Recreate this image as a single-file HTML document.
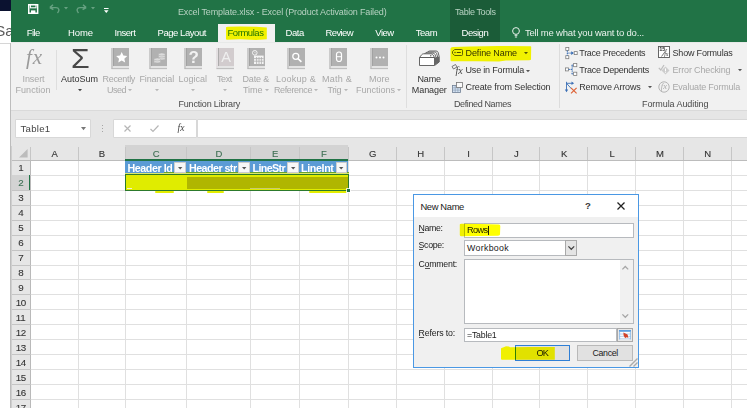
<!DOCTYPE html>
<html><head><meta charset="utf-8"><title>Excel - New Name</title><style>
html,body{margin:0;padding:0}
body{width:747px;height:408px;position:relative;overflow:hidden;background:#fff;font-family:"Liberation Sans",sans-serif;}
.a{position:absolute}
.t{position:absolute;white-space:nowrap;line-height:1}
svg{overflow:visible}
</style></head><body>
<div class="a" style="left:0px;top:0px;width:11px;height:11px;background:#0b1230;"></div>
<div class="a" style="left:0px;top:11px;width:11px;height:397px;background:#ffffff;"></div>
<span class="t" style="left:-4.8px;top:23.00px;font-size:15px;color:#5a5a5a;font-weight:normal;letter-spacing:0.000px;">Sa</span>
<div class="a" style="left:11px;top:0px;width:736px;height:41.5px;background:#217346;"></div>
<div class="a" style="left:450px;top:0px;width:50.4px;height:41.5px;background:#1b5c38;"></div>
<div class="a" style="left:218px;top:24px;width:57px;height:18px;background:#f1f1f1;"></div>
<div class="a" style="left:11px;top:41.5px;width:736px;height:69.5px;background:#f1f1f1;"></div>
<div class="a" style="left:11px;top:110.5px;width:736px;height:50px;background:#e6e6e6;"></div>
<div class="a" style="left:11px;top:110px;width:736px;height:1px;background:#dadada;"></div>
<div class="a" style="left:10px;top:43px;width:1px;height:365px;background:#bdbdbd;"></div>
<div class="a" style="left:0px;top:43px;width:10px;height:1px;background:#d6d6d6;"></div>
<div class="a" style="left:11px;top:41.5px;width:736px;height:1px;background:#e7e9e8;"></div>
<span class="t" style="left:178px;top:8.16px;font-size:9px;color:#b7d2c2;font-weight:normal;letter-spacing:-0.144px;">Excel Template.xlsx - Excel (Product Activation Failed)</span>
<span class="t" style="left:455px;top:8.16px;font-size:9px;color:#b7d2c2;font-weight:normal;letter-spacing:-0.398px;">Table Tools</span>
<span class="t" style="left:26.8px;top:27.93px;font-size:9.5px;color:#ffffff;font-weight:normal;letter-spacing:-0.603px;">File</span>
<span class="t" style="left:68px;top:27.93px;font-size:9.5px;color:#ffffff;font-weight:normal;letter-spacing:-0.086px;">Home</span>
<span class="t" style="left:114.5px;top:27.93px;font-size:9.5px;color:#ffffff;font-weight:normal;letter-spacing:-0.461px;">Insert</span>
<span class="t" style="left:157.5px;top:27.93px;font-size:9.5px;color:#ffffff;font-weight:normal;letter-spacing:-0.442px;">Page Layout</span>
<span class="t" style="left:227.5px;top:27.93px;font-size:9.5px;color:#217346;font-weight:normal;letter-spacing:-0.449px;">Formulas</span>
<svg class="a" style="left:0;top:0;mix-blend-mode:multiply;opacity:1" width="747" height="408" viewBox="0 0 747 408"><path d="M226 27.600 Q226 26.800 228 26.700 L240 26.400 L256 26.800 L266.800 27.400 L266.800 39.300 L256 40 L240 39.3 L227 39.8 Q226 39.8 226 39 Z" fill="#ffff00"/></svg>
<span class="t" style="left:285.5px;top:27.93px;font-size:9.5px;color:#ffffff;font-weight:normal;letter-spacing:-0.395px;">Data</span>
<span class="t" style="left:325.5px;top:27.93px;font-size:9.5px;color:#ffffff;font-weight:normal;letter-spacing:-0.609px;">Review</span>
<span class="t" style="left:375.3px;top:27.93px;font-size:9.5px;color:#ffffff;font-weight:normal;letter-spacing:-0.530px;">View</span>
<span class="t" style="left:415.7px;top:27.93px;font-size:9.5px;color:#ffffff;font-weight:normal;letter-spacing:-0.434px;">Team</span>
<span class="t" style="left:461.6px;top:27.93px;font-size:9.5px;color:#ffffff;font-weight:normal;letter-spacing:-0.496px;">Design</span>
<span class="t" style="left:525px;top:27.93px;font-size:9.5px;color:#e8f1eb;font-weight:normal;letter-spacing:-0.205px;">Tell me what you want to do...</span>
<svg class="a" style="left:511px;top:26px;" width="10" height="14" viewBox="0 0 10 14"><circle cx="5" cy="5" r="3.4" fill="none" stroke="#e8f1eb" stroke-width="1"/><path d="M3.6 9.3h2.8M3.9 11h2.2" stroke="#e8f1eb" stroke-width="1" fill="none"/></svg>
<svg class="a" style="left:27.6px;top:4px;" width="10.4" height="10" viewBox="0 0 10.4 10"><rect x="0.750" y="0.750" width="8.900" height="8.500" fill="none" stroke="#fff" stroke-width="1.500"/><rect x="2.400" y="0.500" width="5.600" height="3.300" fill="none" stroke="#fff" stroke-width="1.100"/><rect x="3" y="6.400" width="4.400" height="3.200" fill="#fff"/></svg>
<svg class="a" style="left:49px;top:4px;" width="12" height="10" viewBox="0 0 12 10"><path d="M0.8 3.6 L4 0.8 M0.8 3.6 L4.4 5.6 M0.8 3.6 H7 C10 3.6 11 6.5 8.5 9" fill="none" stroke="#66a181" stroke-width="1.450"/></svg>
<svg class="a" style="left:64px;top:6.9px;" width="4" height="3" viewBox="0 0 4 3"><path d="M0 0h4L2 2.4z" fill="#66a181"/></svg>
<svg class="a" style="left:75px;top:4px;" width="12" height="10" viewBox="0 0 12 10"><path d="M11.2 3.6 L8 0.8 M11.2 3.6 L7.6 5.6 M11.2 3.6 H5 C2 3.6 1 6.5 3.5 9" fill="none" stroke="#66a181" stroke-width="1.450"/></svg>
<svg class="a" style="left:90.5px;top:6.9px;" width="4" height="3" viewBox="0 0 4 3"><path d="M0 0h4L2 2.4z" fill="#66a181"/></svg>
<svg class="a" style="left:104px;top:7.8px;" width="4.6" height="5.2" viewBox="0 0 4.6 5.2"><path d="M0 0.500h4.600" stroke="#fff" stroke-width="1"/><path d="M0 2.300h4.600L2.300 4.900z" fill="#fff"/></svg>
<span class="t" style="left:26px;top:47.30px;font-size:21px;color:#9a9a9a;font-weight:normal;letter-spacing:0.922px;font-family:'Liberation Serif',serif;font-style:italic;">fx</span>
<span class="t" style="left:22.5px;top:74.66px;font-size:9.0px;color:#a8a8a8;font-weight:normal;letter-spacing:-0.086px;">Insert</span>
<span class="t" style="left:15.5px;top:86.16px;font-size:9.0px;color:#a8a8a8;font-weight:normal;letter-spacing:0.059px;">Function</span>
<div class="a" style="left:56px;top:50px;width:1px;height:40px;background:#dedede;"></div>
<span class="t" style="left:71px;top:45.98px;font-size:27px;color:#484848;font-weight:normal;letter-spacing:0.000px;transform:scaleX(1.12);transform-origin:0 0;">Σ</span>
<span class="t" style="left:61px;top:74.66px;font-size:9.0px;color:#333333;font-weight:normal;letter-spacing:-0.004px;">AutoSum</span>
<svg class="a" style="left:78px;top:88.7px;" width="4" height="2.3" viewBox="0 0 4 2.3"><path d="M0 0h4L2 2.3z" fill="#444"/></svg>
<svg class="a" style="left:110.6px;top:47.5px;" width="18" height="21" viewBox="0 0 18 21"><rect x="0" y="0" width="18" height="18.2" fill="#b1b1b1"/><rect x="0" y="0" width="2" height="20.8" fill="#cbcbcb"/><rect x="2" y="0" width="0.7" height="18.2" fill="#9c9c9c"/><rect x="2" y="18.2" width="16" height="2" fill="#e4e4e4"/><rect x="0.5" y="20.2" width="17.5" height="0.9" fill="#b4b4b4"/><path d="M10.7 4l1.65 3.6 3.9.4-2.9 2.65.8 3.9-3.45-2-3.45 2 .8-3.9-2.9-2.65 3.9-.4z" fill="#fff"/></svg>
<span class="t" style="left:102.5px;top:74.66px;font-size:9.0px;color:#a8a8a8;font-weight:normal;letter-spacing:-0.314px;">Recently</span>
<span class="t" style="left:107px;top:86.16px;font-size:9.0px;color:#a8a8a8;font-weight:normal;letter-spacing:-0.504px;">Used</span>
<svg class="a" style="left:128px;top:88.7px;" width="4" height="2.3" viewBox="0 0 4 2.3"><path d="M0 0h4L2 2.3z" fill="#b8b8b8"/></svg>
<svg class="a" style="left:148.8px;top:47.5px;" width="18" height="21" viewBox="0 0 18 21"><rect x="0" y="0" width="18" height="18.2" fill="#b1b1b1"/><rect x="0" y="0" width="2" height="20.8" fill="#cbcbcb"/><rect x="2" y="0" width="0.7" height="18.2" fill="#9c9c9c"/><rect x="2" y="18.2" width="16" height="2" fill="#e4e4e4"/><rect x="0.5" y="20.2" width="17.5" height="0.9" fill="#b4b4b4"/><g fill="#dcdcdc" stroke="#adadad" stroke-width="0.5"><ellipse cx="12.8" cy="10.4" rx="3.3" ry="1.5"/><ellipse cx="12.8" cy="8.4" rx="3.3" ry="1.5"/><ellipse cx="12.8" cy="6.4" rx="3.3" ry="1.5"/><ellipse cx="8.3" cy="13.4" rx="3.3" ry="1.5"/><ellipse cx="8.3" cy="11.4" rx="3.3" ry="1.5"/></g></svg>
<span class="t" style="left:139.5px;top:74.66px;font-size:9.0px;color:#a8a8a8;font-weight:normal;letter-spacing:-0.170px;">Financial</span>
<svg class="a" style="left:155px;top:88.7px;" width="4" height="2.3" viewBox="0 0 4 2.3"><path d="M0 0h4L2 2.3z" fill="#b8b8b8"/></svg>
<svg class="a" style="left:184px;top:47.5px;" width="18" height="21" viewBox="0 0 18 21"><rect x="0" y="0" width="18" height="18.2" fill="#b1b1b1"/><rect x="0" y="0" width="2" height="20.8" fill="#cbcbcb"/><rect x="2" y="0" width="0.7" height="18.2" fill="#9c9c9c"/><rect x="2" y="18.2" width="16" height="2" fill="#e4e4e4"/><rect x="0.5" y="20.2" width="17.5" height="0.9" fill="#b4b4b4"/></svg>
<span class="t" style="left:188.6px;top:48.97px;font-size:17px;color:#f2f2f2;font-weight:bold;letter-spacing:0.000px;">?</span>
<span class="t" style="left:178.5px;top:74.66px;font-size:9.0px;color:#a8a8a8;font-weight:normal;letter-spacing:-0.004px;">Logical</span>
<svg class="a" style="left:191px;top:88.7px;" width="4" height="2.3" viewBox="0 0 4 2.3"><path d="M0 0h4L2 2.3z" fill="#b8b8b8"/></svg>
<svg class="a" style="left:216.2px;top:47.5px;" width="18" height="21" viewBox="0 0 18 21"><rect x="0" y="0" width="18" height="18.2" fill="#d2ccce"/><rect x="0" y="0" width="2" height="20.8" fill="#e4e0e2"/><rect x="2" y="0" width="0.7" height="18.2" fill="#9c9c9c"/><rect x="2" y="18.2" width="16" height="2" fill="#e4e4e4"/><rect x="0.5" y="20.2" width="17.5" height="0.9" fill="#b4b4b4"/></svg>
<span class="t" style="left:221.2px;top:50.20px;font-size:14.6px;color:#efefef;font-weight:normal;letter-spacing:0.000px;">A</span>
<span class="t" style="left:217px;top:74.66px;font-size:9.0px;color:#a8a8a8;font-weight:normal;letter-spacing:-0.379px;">Text</span>
<svg class="a" style="left:222.5px;top:88.7px;" width="4" height="2.3" viewBox="0 0 4 2.3"><path d="M0 0h4L2 2.3z" fill="#b8b8b8"/></svg>
<svg class="a" style="left:247px;top:47.5px;" width="18" height="21" viewBox="0 0 18 21"><rect x="0" y="0" width="18" height="18.2" fill="#b1b1b1"/><rect x="0" y="0" width="2" height="20.8" fill="#cbcbcb"/><rect x="2" y="0" width="0.7" height="18.2" fill="#9c9c9c"/><rect x="2" y="18.2" width="16" height="2" fill="#e4e4e4"/><rect x="0.5" y="20.2" width="17.5" height="0.9" fill="#b4b4b4"/><rect x="7" y="7.6" width="9.6" height="8.4" fill="#f4f4f4"/><path d="M7 10.6h9.6M7 13.2h9.6M9.6 9v7M12 9v7M14.400 9v7" stroke="#adadad" stroke-width="0.8"/><circle cx="7.8" cy="4.8" r="2.3" fill="#adadad" stroke="#f4f4f4" stroke-width="1"/><path d="M7.8 3.6v1.4h1" stroke="#f4f4f4" stroke-width="0.6" fill="none"/></svg>
<span class="t" style="left:242.5px;top:74.66px;font-size:9.0px;color:#a8a8a8;font-weight:normal;letter-spacing:-0.169px;">Date &amp;</span>
<span class="t" style="left:243px;top:86.16px;font-size:9.0px;color:#a8a8a8;font-weight:normal;letter-spacing:-0.043px;">Time</span>
<svg class="a" style="left:265px;top:88.7px;" width="4" height="2.3" viewBox="0 0 4 2.3"><path d="M0 0h4L2 2.3z" fill="#b8b8b8"/></svg>
<svg class="a" style="left:287.2px;top:47.5px;" width="18" height="21" viewBox="0 0 18 21"><rect x="0" y="0" width="18" height="18.2" fill="#b1b1b1"/><rect x="0" y="0" width="2" height="20.8" fill="#cbcbcb"/><rect x="2" y="0" width="0.7" height="18.2" fill="#9c9c9c"/><rect x="2" y="18.2" width="16" height="2" fill="#e4e4e4"/><rect x="0.5" y="20.2" width="17.5" height="0.9" fill="#b4b4b4"/><circle cx="8.8" cy="8.3" r="3" fill="none" stroke="#fff" stroke-width="1.3"/><path d="M11 10.600l3.4 3.2" stroke="#fff" stroke-width="1.6"/></svg>
<span class="t" style="left:276px;top:74.66px;font-size:9.0px;color:#a8a8a8;font-weight:normal;letter-spacing:0.246px;">Lookup &amp;</span>
<span class="t" style="left:274px;top:86.16px;font-size:9.0px;color:#a8a8a8;font-weight:normal;letter-spacing:-0.392px;">Reference</span>
<svg class="a" style="left:314px;top:88.7px;" width="4" height="2.3" viewBox="0 0 4 2.3"><path d="M0 0h4L2 2.3z" fill="#b8b8b8"/></svg>
<svg class="a" style="left:328.5px;top:47.5px;" width="18" height="21" viewBox="0 0 18 21"><rect x="0" y="0" width="18" height="18.2" fill="#b1b1b1"/><rect x="0" y="0" width="2" height="20.8" fill="#cbcbcb"/><rect x="2" y="0" width="0.7" height="18.2" fill="#9c9c9c"/><rect x="2" y="18.2" width="16" height="2" fill="#e4e4e4"/><rect x="0.5" y="20.2" width="17.5" height="0.9" fill="#b4b4b4"/><rect x="7.5" y="4" width="5" height="9.5" rx="2.5" fill="none" stroke="#fff" stroke-width="1.2"/><path d="M7.5 8.7h5" stroke="#fff" stroke-width="1"/></svg>
<span class="t" style="left:322px;top:74.66px;font-size:9.0px;color:#a8a8a8;font-weight:normal;letter-spacing:0.247px;">Math &amp;</span>
<span class="t" style="left:327.5px;top:86.16px;font-size:9.0px;color:#a8a8a8;font-weight:normal;letter-spacing:-0.418px;">Trig</span>
<svg class="a" style="left:344px;top:88.7px;" width="4" height="2.3" viewBox="0 0 4 2.3"><path d="M0 0h4L2 2.3z" fill="#b8b8b8"/></svg>
<svg class="a" style="left:369.5px;top:47.5px;" width="18" height="21" viewBox="0 0 18 21"><rect x="0" y="0" width="18" height="18.2" fill="#b1b1b1"/><rect x="0" y="0" width="2" height="20.8" fill="#cbcbcb"/><rect x="2" y="0" width="0.7" height="18.2" fill="#9c9c9c"/><rect x="2" y="18.2" width="16" height="2" fill="#e4e4e4"/><rect x="0.5" y="20.2" width="17.5" height="0.9" fill="#b4b4b4"/><circle cx="6.5" cy="9.5" r="1" fill="#fff"/><circle cx="10" cy="9.5" r="1" fill="#fff"/><circle cx="13.5" cy="9.5" r="1" fill="#fff"/></svg>
<span class="t" style="left:369px;top:74.66px;font-size:9.0px;color:#a8a8a8;font-weight:normal;letter-spacing:-0.004px;">More</span>
<span class="t" style="left:356px;top:86.16px;font-size:9.0px;color:#a8a8a8;font-weight:normal;letter-spacing:-0.003px;">Functions</span>
<svg class="a" style="left:397px;top:88.7px;" width="4" height="2.3" viewBox="0 0 4 2.3"><path d="M0 0h4L2 2.3z" fill="#b8b8b8"/></svg>
<span class="t" style="left:178.5px;top:100.26px;font-size:9.0px;color:#4a4a4a;font-weight:normal;letter-spacing:-0.189px;">Function Library</span>
<div class="a" style="left:405.8px;top:45px;width:1px;height:62.5px;background:#dedede;"></div>
<svg class="a" style="left:419px;top:50px;" width="21" height="16" viewBox="0 0 21 16"><g fill="#fff" stroke="#555" stroke-width="0.9" stroke-linejoin="round"><path d="M7.500 7.500L9 2.200Q9.300 1 10.800 1H17Q18.500 1 19 2.200L20.200 6.500V12L16 15.200"/><path d="M5.500 7.500L7 3.200Q7.400 2 8.900 2H15.500Q17 2 17.500 3.200L18.800 7.500"/><path d="M3.500 7.500L5.200 4.200Q5.700 3 7.200 3H13.800Q15.300 3 15.800 4.200L17.200 7.500"/><path d="M0.500 7.500L2.800 4.600Q3.500 3.800 4.800 3.800H12Q13.400 3.800 14 4.800L15.500 7.500z"/><rect x="0.500" y="7.500" width="15" height="8"/></g><path d="M15.500 7.500L20.200 6.500V12L15.500 15.500z" fill="#666"/><circle cx="11.800" cy="5.800" r="0.700" fill="#555"/></svg>
<span class="t" style="left:417.5px;top:74.66px;font-size:9.0px;color:#333333;font-weight:normal;letter-spacing:-0.129px;">Name</span>
<span class="t" style="left:411.8px;top:86.16px;font-size:9.0px;color:#333333;font-weight:normal;letter-spacing:-0.076px;">Manager</span>
<svg class="a" style="left:451.5px;top:48.8px;" width="11" height="7" viewBox="0 0 11 7"><path d="M2.600 0.500H9.600Q10.500 0.500 10.500 1.400V5.600Q10.500 6.500 9.600 6.500H2.600L0.500 4.400V2.600z" fill="none" stroke="#4a4a4a" stroke-width="0.850"/><circle cx="3" cy="3.500" r="0.700" fill="#4a4a4a"/><path d="M4.800 3.500h4" stroke="#4a4a4a" stroke-width="1"/></svg>
<span class="t" style="left:465.5px;top:48.56px;font-size:9.0px;color:#333333;font-weight:normal;letter-spacing:-0.094px;">Define Name</span>
<svg class="a" style="left:524.2px;top:51.5px;" width="4" height="2.3" viewBox="0 0 4 2.3"><path d="M0 0h4L2 2.3z" fill="#555"/></svg>
<svg class="a" style="left:0;top:0;mix-blend-mode:multiply;opacity:1" width="747" height="408" viewBox="0 0 747 408"><path d="M450.5 48.6 Q450.6 47.4 453 47 L470 46.6 L498 45.9 L530.6 46.2 Q531.2 46.2 531.200 47 L531 59.6 Q531 60.2 529 60.3 L506 60.4 L499 61.500 L476 61.2 L451.5 61.2 Q450.5 61.2 450.5 60 Z" fill="#ffff00"/></svg>
<svg class="a" style="left:451px;top:64px;" width="12" height="12" viewBox="0 0 12 12"><path d="M1 2.5 L4.5 0.5 L6 3 L2.5 5z" fill="none" stroke="#666" stroke-width="0.9"/></svg>
<span class="t" style="left:455.5px;top:65.70px;font-size:10px;color:#444;font-weight:normal;letter-spacing:0.000px;font-family:'Liberation Serif',serif;font-style:italic;">fx</span>
<span class="t" style="left:465.5px;top:66.06px;font-size:9.0px;color:#333333;font-weight:normal;letter-spacing:-0.181px;">Use in Formula</span>
<svg class="a" style="left:526px;top:69.5px;" width="4" height="2.3" viewBox="0 0 4 2.3"><path d="M0 0h4L2 2.3z" fill="#555"/></svg>
<svg class="a" style="left:451.5px;top:81.5px;" width="11" height="11" viewBox="0 0 11 11"><rect x="0.500" y="3.500" width="8" height="7" fill="#d5e3f3" stroke="#6f7f93" stroke-width="0.800"/><path d="M0.500 5.800h8M0.500 8.100h8M3.200 3.500v7M5.900 3.500v7" stroke="#8195ad" stroke-width="0.600"/><rect x="4.500" y="0.500" width="6" height="5" fill="#fafafa" stroke="#777" stroke-width="0.800"/></svg>
<span class="t" style="left:465.5px;top:83.06px;font-size:9.0px;color:#333333;font-weight:normal;letter-spacing:-0.097px;">Create from Selection</span>
<span class="t" style="left:454px;top:100.26px;font-size:9.0px;color:#4a4a4a;font-weight:normal;letter-spacing:-0.387px;">Defined Names</span>
<div class="a" style="left:558.5px;top:44px;width:1px;height:64px;background:#dcdcdc;"></div>
<svg class="a" style="left:564.5px;top:46.5px;" width="13" height="12.5" viewBox="0 0 13 12.5"><g fill="#fff" stroke="#7d7d7d" stroke-width="0.800"><rect x="0.800" y="0.500" width="3" height="3"/><rect x="0.800" y="8.700" width="3" height="3"/><rect x="9.200" y="4.600" width="3" height="3"/></g><path d="M2.300 3.500v5.200M2.300 6.100h5.500" stroke="#3b6fb5" stroke-width="1" fill="none" stroke-dasharray="1.400 0.700"/><path d="M6.200 4.300l2.700 1.800-2.700 1.800z" fill="#3b6fb5"/></svg>
<span class="t" style="left:579.3px;top:48.56px;font-size:9.0px;color:#333333;font-weight:normal;letter-spacing:-0.294px;">Trace Precedents</span>
<svg class="a" style="left:564.5px;top:63.3px;" width="13" height="13" viewBox="0 0 13 13"><g fill="#fff" stroke="#7d7d7d" stroke-width="0.800"><rect x="0.500" y="4.900" width="3" height="3"/><rect x="8.600" y="0.500" width="3.200" height="3.200"/><rect x="8.600" y="9.200" width="3.200" height="3.200"/></g><path d="M3.500 6.400h4M7.200 3.200v6.600" stroke="#3b6fb5" stroke-width="1" fill="none" stroke-dasharray="1.400 0.700"/><path d="M6 2.800l1.200-1.600 1.200 1.600zM6 10.200l1.200 1.600 1.200-1.600z" fill="#3b6fb5"/></svg>
<span class="t" style="left:579.3px;top:65.66px;font-size:9.0px;color:#333333;font-weight:normal;letter-spacing:-0.251px;">Trace Dependents</span>
<svg class="a" style="left:564px;top:80.5px;" width="14" height="13" viewBox="0 0 14 13"><path d="M2.500 0.800v9.500M2.500 2.300h6M2.500 2.300l5 5.500" stroke="#3b6fb5" stroke-width="0.900" fill="none"/><path d="M0.800 8.500l1.700 2.800 1.700-2.800zM7.500 0.600l2.600 1.700-2.600 1.700z" fill="#3b6fb5"/><path d="M7 6.800l5.600 5.600M12.600 6.800l-5.600 5.600" stroke="#dd6236" stroke-width="1.150"/></svg>
<span class="t" style="left:579.3px;top:83.06px;font-size:9.0px;color:#333333;font-weight:normal;letter-spacing:-0.172px;">Remove Arrows</span>
<svg class="a" style="left:648px;top:85.5px;" width="4" height="2.3" viewBox="0 0 4 2.3"><path d="M0 0h4L2 2.3z" fill="#555"/></svg>
<svg class="a" style="left:658px;top:46px;" width="12" height="12" viewBox="0 0 12 12"><rect x="0.5" y="0.5" width="11" height="11" fill="#fff" stroke="#555" stroke-width="0.9"/><path d="M3.500 10.500l5.500-7.500" stroke="#555" stroke-width="0.8"/></svg>
<span class="t" style="left:659.2px;top:46.80px;font-size:5.6px;color:#333;font-weight:bold;letter-spacing:0.000px;">15</span>
<span class="t" style="left:664.2px;top:51.70px;font-size:5.8px;color:#333;font-weight:normal;letter-spacing:0.000px;font-family:'Liberation Serif',serif;font-style:italic;">fx</span>
<span class="t" style="left:672.5px;top:48.56px;font-size:9.0px;color:#333333;font-weight:normal;letter-spacing:-0.187px;">Show Formulas</span>
<svg class="a" style="left:658px;top:63.5px;" width="12" height="12" viewBox="0 0 12 12"><path d="M0.800 3.800l2 2.200 3.200-5" stroke="#bdbdbd" stroke-width="1.200" fill="none"/><path d="M7.500 2.600l4 4-4 4-4-4z" fill="#cdcdcd"/><rect x="7" y="4.400" width="1" height="2.700" fill="#fff"/><rect x="7" y="7.700" width="1" height="1" fill="#fff"/></svg>
<span class="t" style="left:672.5px;top:65.66px;font-size:9.0px;color:#a8a8a8;font-weight:normal;letter-spacing:-0.152px;">Error Checking</span>
<svg class="a" style="left:737.8px;top:68.6px;" width="4" height="2.3" viewBox="0 0 4 2.3"><path d="M0 0h4L2 2.3z" fill="#555"/></svg>
<svg class="a" style="left:658px;top:80.5px;" width="12" height="12" viewBox="0 0 12 12"><circle cx="6" cy="6" r="5.2" fill="none" stroke="#b5b5b5" stroke-width="1"/></svg>
<span class="t" style="left:660.8px;top:82.07px;font-size:8.5px;color:#aaa;font-weight:normal;letter-spacing:0.000px;font-family:'Liberation Serif',serif;font-style:italic;">fx</span>
<span class="t" style="left:672.5px;top:83.06px;font-size:9.0px;color:#a8a8a8;font-weight:normal;letter-spacing:-0.190px;">Evaluate Formula</span>
<span class="t" style="left:642px;top:100.26px;font-size:9.0px;color:#4a4a4a;font-weight:normal;letter-spacing:-0.065px;">Formula Auditing</span>
<div class="a" style="left:15.5px;top:119.5px;width:74.5px;height:17.4px;background:#ffffff;box-shadow:0 0 0 0.6px #d0d0d0"></div>
<span class="t" style="left:20.5px;top:124.48px;font-size:9.6px;color:#444;font-weight:normal;letter-spacing:0.286px;">Table1</span>
<svg class="a" style="left:80.5px;top:126.5px;" width="5" height="3.2" viewBox="0 0 5 3.2"><path d="M0 0h5L2.5 3.2z" fill="#777"/></svg>
<div class="a" style="left:101.5px;top:125.4px;width:1.1px;height:1.1px;background:#a5a5a5;"></div>
<div class="a" style="left:101.5px;top:128px;width:1.1px;height:1.1px;background:#a5a5a5;"></div>
<div class="a" style="left:101.5px;top:130.6px;width:1.1px;height:1.1px;background:#a5a5a5;"></div>
<div class="a" style="left:113.5px;top:119.5px;width:82px;height:17.4px;background:#ffffff;box-shadow:0 0 0 0.6px #d0d0d0"></div>
<div class="a" style="left:198px;top:119.5px;width:549px;height:17.4px;background:#ffffff;box-shadow:0 0 0 0.6px #d0d0d0"></div>
<svg class="a" style="left:124px;top:125px;" width="7" height="7" viewBox="0 0 7 7"><path d="M0.5 0.5l6 6M6.5 0.5l-6 6" stroke="#b6b6b6" stroke-width="1.200"/></svg>
<svg class="a" style="left:150px;top:125px;" width="9" height="7" viewBox="0 0 9 7"><path d="M0.500 4l2.500 2.500L8.500 0.500" stroke="#b6b6b6" stroke-width="1.200" fill="none"/></svg>
<span class="t" style="left:177.5px;top:124.09px;font-size:9.5px;color:#444;font-weight:normal;letter-spacing:0.000px;font-family:'Liberation Serif',serif;font-style:italic;">fx</span>
<div class="a" style="left:30.5px;top:160.5px;width:717px;height:248px;background:#ffffff;"></div>
<div class="a" style="left:125px;top:145.4px;width:223px;height:15px;background:#d3d3d3;"></div>
<span class="t" style="left:44.75px;top:148.73px;font-size:9.5px;color:#333333;font-weight:normal;letter-spacing:0.000px;width:20px;text-align:center;-webkit-text-stroke:0.12px currentColor;">A</span>
<div class="a" style="left:77.5px;top:147px;width:1px;height:13.5px;background:#c6c6c6;"></div>
<span class="t" style="left:92.0px;top:148.73px;font-size:9.5px;color:#333333;font-weight:normal;letter-spacing:0.000px;width:20px;text-align:center;-webkit-text-stroke:0.12px currentColor;">B</span>
<div class="a" style="left:124.5px;top:147px;width:1px;height:13.5px;background:#c6c6c6;"></div>
<span class="t" style="left:146.25px;top:148.73px;font-size:9.5px;color:#3c6e52;font-weight:normal;letter-spacing:0.000px;width:20px;text-align:center;-webkit-text-stroke:0.12px currentColor;">C</span>
<div class="a" style="left:186.0px;top:147px;width:1px;height:13.5px;background:#c6c6c6;"></div>
<span class="t" style="left:209.0px;top:148.73px;font-size:9.5px;color:#3c6e52;font-weight:normal;letter-spacing:0.000px;width:20px;text-align:center;-webkit-text-stroke:0.12px currentColor;">D</span>
<div class="a" style="left:250.0px;top:147px;width:1px;height:13.5px;background:#c6c6c6;"></div>
<span class="t" style="left:265.25px;top:148.73px;font-size:9.5px;color:#3c6e52;font-weight:normal;letter-spacing:0.000px;width:20px;text-align:center;-webkit-text-stroke:0.12px currentColor;">E</span>
<div class="a" style="left:298.5px;top:147px;width:1px;height:13.5px;background:#c6c6c6;"></div>
<span class="t" style="left:314.0px;top:148.73px;font-size:9.5px;color:#3c6e52;font-weight:normal;letter-spacing:0.000px;width:20px;text-align:center;-webkit-text-stroke:0.12px currentColor;">F</span>
<div class="a" style="left:347.5px;top:147px;width:1px;height:13.5px;background:#c6c6c6;"></div>
<span class="t" style="left:362.67px;top:148.73px;font-size:9.5px;color:#333333;font-weight:normal;letter-spacing:0.000px;width:20px;text-align:center;-webkit-text-stroke:0.12px currentColor;">G</span>
<div class="a" style="left:395.84000000000003px;top:147px;width:1px;height:13.5px;background:#c6c6c6;"></div>
<span class="t" style="left:410.76px;top:148.73px;font-size:9.5px;color:#333333;font-weight:normal;letter-spacing:0.000px;width:20px;text-align:center;-webkit-text-stroke:0.12px currentColor;">H</span>
<div class="a" style="left:443.68px;top:147px;width:1px;height:13.5px;background:#c6c6c6;"></div>
<span class="t" style="left:458.6px;top:148.73px;font-size:9.5px;color:#333333;font-weight:normal;letter-spacing:0.000px;width:20px;text-align:center;-webkit-text-stroke:0.12px currentColor;">I</span>
<div class="a" style="left:491.52px;top:147px;width:1px;height:13.5px;background:#c6c6c6;"></div>
<span class="t" style="left:506.44000000000005px;top:148.73px;font-size:9.5px;color:#333333;font-weight:normal;letter-spacing:0.000px;width:20px;text-align:center;-webkit-text-stroke:0.12px currentColor;">J</span>
<div class="a" style="left:539.36px;top:147px;width:1px;height:13.5px;background:#c6c6c6;"></div>
<span class="t" style="left:554.28px;top:148.73px;font-size:9.5px;color:#333333;font-weight:normal;letter-spacing:0.000px;width:20px;text-align:center;-webkit-text-stroke:0.12px currentColor;">K</span>
<div class="a" style="left:587.2px;top:147px;width:1px;height:13.5px;background:#c6c6c6;"></div>
<span class="t" style="left:602.12px;top:148.73px;font-size:9.5px;color:#333333;font-weight:normal;letter-spacing:0.000px;width:20px;text-align:center;-webkit-text-stroke:0.12px currentColor;">L</span>
<div class="a" style="left:635.04px;top:147px;width:1px;height:13.5px;background:#c6c6c6;"></div>
<span class="t" style="left:649.96px;top:148.73px;font-size:9.5px;color:#333333;font-weight:normal;letter-spacing:0.000px;width:20px;text-align:center;-webkit-text-stroke:0.12px currentColor;">M</span>
<div class="a" style="left:682.88px;top:147px;width:1px;height:13.5px;background:#c6c6c6;"></div>
<span class="t" style="left:697.8px;top:148.73px;font-size:9.5px;color:#333333;font-weight:normal;letter-spacing:0.000px;width:20px;text-align:center;-webkit-text-stroke:0.12px currentColor;">N</span>
<div class="a" style="left:730.72px;top:147px;width:1px;height:13.5px;background:#c6c6c6;"></div>
<div class="a" style="left:778.5600000000001px;top:147px;width:1px;height:13.5px;background:#c6c6c6;"></div>
<div class="a" style="left:30px;top:147px;width:1px;height:13.5px;background:#c6c6c6;"></div>
<svg class="a" style="left:19.2px;top:148.8px;" width="8.6" height="8.6" viewBox="0 0 8.6 8.6"><path d="M8.600 0V8.600H0z" fill="#bcbcbc"/></svg>
<div class="a" style="left:11px;top:160px;width:736px;height:1px;background:#bcbcbc;"></div>
<div class="a" style="left:125px;top:159px;width:223px;height:1.7px;background:#217346;"></div>
<div class="a" style="left:11px;top:161px;width:19.5px;height:247px;background:#e6e6e6;"></div>
<div class="a" style="left:11px;top:146px;width:1px;height:262px;background:#cfcfcf;"></div>
<div class="a" style="left:30px;top:161px;width:1px;height:247px;background:#b9b9b9;"></div>
<span class="t" style="left:18.2px;top:163.49px;font-size:9.8px;color:#333333;font-weight:normal;letter-spacing:0.000px;-webkit-text-stroke:0.1px currentColor;">1</span>
<div class="a" style="left:11.5px;top:174.8px;width:19px;height:1px;background:#c4c4c4;"></div>
<div class="a" style="left:30.5px;top:174.8px;width:717px;height:1px;background:#e0e0e0;"></div>
<div class="a" style="left:11.5px;top:175.25px;width:18.5px;height:15px;background:#d3d3d3;"></div>
<div class="a" style="left:28.8px;top:175.25px;width:1.7px;height:15px;background:#217346;"></div>
<span class="t" style="left:18.2px;top:178.44px;font-size:9.8px;color:#3c6e52;font-weight:normal;letter-spacing:0.000px;-webkit-text-stroke:0.1px currentColor;">2</span>
<div class="a" style="left:11.5px;top:189.75px;width:19px;height:1px;background:#c4c4c4;"></div>
<div class="a" style="left:30.5px;top:189.75px;width:717px;height:1px;background:#e0e0e0;"></div>
<span class="t" style="left:18.2px;top:193.39px;font-size:9.8px;color:#333333;font-weight:normal;letter-spacing:0.000px;-webkit-text-stroke:0.1px currentColor;">3</span>
<div class="a" style="left:11.5px;top:204.70000000000002px;width:19px;height:1px;background:#c4c4c4;"></div>
<div class="a" style="left:30.5px;top:204.70000000000002px;width:717px;height:1px;background:#e0e0e0;"></div>
<span class="t" style="left:18.2px;top:208.34px;font-size:9.8px;color:#333333;font-weight:normal;letter-spacing:0.000px;-webkit-text-stroke:0.1px currentColor;">4</span>
<div class="a" style="left:11.5px;top:219.65px;width:19px;height:1px;background:#c4c4c4;"></div>
<div class="a" style="left:30.5px;top:219.65px;width:717px;height:1px;background:#e0e0e0;"></div>
<span class="t" style="left:18.2px;top:223.29px;font-size:9.8px;color:#333333;font-weight:normal;letter-spacing:0.000px;-webkit-text-stroke:0.1px currentColor;">5</span>
<div class="a" style="left:11.5px;top:234.60000000000002px;width:19px;height:1px;background:#c4c4c4;"></div>
<div class="a" style="left:30.5px;top:234.60000000000002px;width:717px;height:1px;background:#e0e0e0;"></div>
<span class="t" style="left:18.2px;top:238.24px;font-size:9.8px;color:#333333;font-weight:normal;letter-spacing:0.000px;-webkit-text-stroke:0.1px currentColor;">6</span>
<div class="a" style="left:11.5px;top:249.55px;width:19px;height:1px;background:#c4c4c4;"></div>
<div class="a" style="left:30.5px;top:249.55px;width:717px;height:1px;background:#e0e0e0;"></div>
<span class="t" style="left:18.2px;top:253.19px;font-size:9.8px;color:#333333;font-weight:normal;letter-spacing:0.000px;-webkit-text-stroke:0.1px currentColor;">7</span>
<div class="a" style="left:11.5px;top:264.5px;width:19px;height:1px;background:#c4c4c4;"></div>
<div class="a" style="left:30.5px;top:264.5px;width:717px;height:1px;background:#e0e0e0;"></div>
<span class="t" style="left:18.2px;top:268.14px;font-size:9.8px;color:#333333;font-weight:normal;letter-spacing:0.000px;-webkit-text-stroke:0.1px currentColor;">8</span>
<div class="a" style="left:11.5px;top:279.45px;width:19px;height:1px;background:#c4c4c4;"></div>
<div class="a" style="left:30.5px;top:279.45px;width:717px;height:1px;background:#e0e0e0;"></div>
<span class="t" style="left:18.2px;top:283.09px;font-size:9.8px;color:#333333;font-weight:normal;letter-spacing:0.000px;-webkit-text-stroke:0.1px currentColor;">9</span>
<div class="a" style="left:11.5px;top:294.4px;width:19px;height:1px;background:#c4c4c4;"></div>
<div class="a" style="left:30.5px;top:294.4px;width:717px;height:1px;background:#e0e0e0;"></div>
<span class="t" style="left:15.7px;top:298.04px;font-size:9.8px;color:#333333;font-weight:normal;letter-spacing:-0.453px;-webkit-text-stroke:0.1px currentColor;">10</span>
<div class="a" style="left:11.5px;top:309.35px;width:19px;height:1px;background:#c4c4c4;"></div>
<div class="a" style="left:30.5px;top:309.35px;width:717px;height:1px;background:#e0e0e0;"></div>
<span class="t" style="left:15.7px;top:312.99px;font-size:9.8px;color:#333333;font-weight:normal;letter-spacing:-0.086px;-webkit-text-stroke:0.1px currentColor;">11</span>
<div class="a" style="left:11.5px;top:324.3px;width:19px;height:1px;background:#c4c4c4;"></div>
<div class="a" style="left:30.5px;top:324.3px;width:717px;height:1px;background:#e0e0e0;"></div>
<span class="t" style="left:15.7px;top:327.94px;font-size:9.8px;color:#333333;font-weight:normal;letter-spacing:-0.453px;-webkit-text-stroke:0.1px currentColor;">12</span>
<div class="a" style="left:11.5px;top:339.25px;width:19px;height:1px;background:#c4c4c4;"></div>
<div class="a" style="left:30.5px;top:339.25px;width:717px;height:1px;background:#e0e0e0;"></div>
<span class="t" style="left:15.7px;top:342.89px;font-size:9.8px;color:#333333;font-weight:normal;letter-spacing:-0.453px;-webkit-text-stroke:0.1px currentColor;">13</span>
<div class="a" style="left:11.5px;top:354.2px;width:19px;height:1px;background:#c4c4c4;"></div>
<div class="a" style="left:30.5px;top:354.2px;width:717px;height:1px;background:#e0e0e0;"></div>
<span class="t" style="left:15.7px;top:357.84px;font-size:9.8px;color:#333333;font-weight:normal;letter-spacing:-0.453px;-webkit-text-stroke:0.1px currentColor;">14</span>
<div class="a" style="left:11.5px;top:369.15px;width:19px;height:1px;background:#c4c4c4;"></div>
<div class="a" style="left:30.5px;top:369.15px;width:717px;height:1px;background:#e0e0e0;"></div>
<span class="t" style="left:15.7px;top:372.79px;font-size:9.8px;color:#333333;font-weight:normal;letter-spacing:-0.453px;-webkit-text-stroke:0.1px currentColor;">15</span>
<div class="a" style="left:11.5px;top:384.1px;width:19px;height:1px;background:#c4c4c4;"></div>
<div class="a" style="left:30.5px;top:384.1px;width:717px;height:1px;background:#e0e0e0;"></div>
<span class="t" style="left:15.7px;top:387.74px;font-size:9.8px;color:#333333;font-weight:normal;letter-spacing:-0.453px;-webkit-text-stroke:0.1px currentColor;">16</span>
<div class="a" style="left:11.5px;top:399.05px;width:19px;height:1px;background:#c4c4c4;"></div>
<div class="a" style="left:30.5px;top:399.05px;width:717px;height:1px;background:#e0e0e0;"></div>
<span class="t" style="left:15.7px;top:402.69px;font-size:9.8px;color:#333333;font-weight:normal;letter-spacing:-0.453px;-webkit-text-stroke:0.1px currentColor;">17</span>
<div class="a" style="left:11.5px;top:414.0px;width:19px;height:1px;background:#c4c4c4;"></div>
<div class="a" style="left:30.5px;top:414.0px;width:717px;height:1px;background:#e0e0e0;"></div>
<div class="a" style="left:77.5px;top:161px;width:1px;height:247px;background:#e0e0e0;"></div>
<div class="a" style="left:124.5px;top:161px;width:1px;height:247px;background:#e0e0e0;"></div>
<div class="a" style="left:186.0px;top:161px;width:1px;height:247px;background:#e0e0e0;"></div>
<div class="a" style="left:250.0px;top:161px;width:1px;height:247px;background:#e0e0e0;"></div>
<div class="a" style="left:298.5px;top:161px;width:1px;height:247px;background:#e0e0e0;"></div>
<div class="a" style="left:347.5px;top:161px;width:1px;height:247px;background:#e0e0e0;"></div>
<div class="a" style="left:395.84000000000003px;top:161px;width:1px;height:247px;background:#e0e0e0;"></div>
<div class="a" style="left:443.68px;top:161px;width:1px;height:247px;background:#e0e0e0;"></div>
<div class="a" style="left:491.52px;top:161px;width:1px;height:247px;background:#e0e0e0;"></div>
<div class="a" style="left:539.36px;top:161px;width:1px;height:247px;background:#e0e0e0;"></div>
<div class="a" style="left:587.2px;top:161px;width:1px;height:247px;background:#e0e0e0;"></div>
<div class="a" style="left:635.04px;top:161px;width:1px;height:247px;background:#e0e0e0;"></div>
<div class="a" style="left:682.88px;top:161px;width:1px;height:247px;background:#e0e0e0;"></div>
<div class="a" style="left:730.72px;top:161px;width:1px;height:247px;background:#e0e0e0;"></div>
<div class="a" style="left:778.5600000000001px;top:161px;width:1px;height:247px;background:#e0e0e0;"></div>
<div class="a" style="left:125px;top:160.8px;width:223px;height:12.2px;background:#5b9bd5;"></div>
<div class="a" style="left:164px;top:172px;width:185px;height:1px;background:#6aa52a;"></div>
<div class="a" style="left:125px;top:173px;width:224px;height:1px;background:#dfe86a;"></div>
<span class="t" style="left:127.5px;top:162.68px;font-size:10.7px;color:#ffffff;font-weight:bold;letter-spacing:-0.413px;">Header Id</span>
<div class="a" style="left:174.3px;top:161.6px;width:11.899999999999977px;height:11.2px;background:#f7f7f7;border-radius:1px;box-shadow:inset 0 0 0 0.7px #bdbdbd"></div>
<svg class="a" style="left:178.05px;top:167px;" width="4.4" height="2.6" viewBox="0 0 4.4 2.6"><path d="M0 0h4.400L2.200 2.600z" fill="#555"/></svg>
<span class="t" style="left:189px;top:162.68px;font-size:10.7px;color:#ffffff;font-weight:bold;letter-spacing:-0.537px;">Header str</span>
<div class="a" style="left:238.4px;top:161.6px;width:11.799999999999983px;height:11.2px;background:#f7f7f7;border-radius:1px;box-shadow:inset 0 0 0 0.7px #bdbdbd"></div>
<svg class="a" style="left:242.10000000000002px;top:167px;" width="4.4" height="2.6" viewBox="0 0 4.4 2.6"><path d="M0 0h4.400L2.200 2.600z" fill="#555"/></svg>
<span class="t" style="left:252.5px;top:162.68px;font-size:10.7px;color:#ffffff;font-weight:bold;letter-spacing:-0.618px;">LineStr</span>
<div class="a" style="left:287.2px;top:161.6px;width:11.400000000000034px;height:11.2px;background:#f7f7f7;border-radius:1px;box-shadow:inset 0 0 0 0.7px #bdbdbd"></div>
<svg class="a" style="left:290.7px;top:167px;" width="4.4" height="2.6" viewBox="0 0 4.4 2.6"><path d="M0 0h4.400L2.200 2.600z" fill="#555"/></svg>
<span class="t" style="left:301px;top:162.68px;font-size:10.7px;color:#ffffff;font-weight:bold;letter-spacing:-0.362px;">LineInt</span>
<div class="a" style="left:335.7px;top:161.6px;width:11.699999999999989px;height:11.2px;background:#f7f7f7;border-radius:1px;box-shadow:inset 0 0 0 0.7px #bdbdbd"></div>
<svg class="a" style="left:339.34999999999997px;top:167px;" width="4.4" height="2.6" viewBox="0 0 4.4 2.6"><path d="M0 0h4.400L2.200 2.600z" fill="#555"/></svg>
<div class="a" style="left:125.5px;top:174.3px;width:223px;height:16.5px;background:#e0ec00;"></div>
<div class="a" style="left:187px;top:176.5px;width:160.5px;height:12.6px;background:#b0b600;"></div>
<div class="a" style="left:154.5px;top:190.5px;width:19px;height:2.2px;background:#e4ee00;border-radius:2px"></div>
<div class="a" style="left:207px;top:190.5px;width:17px;height:2.4px;background:#e4ee00;border-radius:2px"></div>
<div class="a" style="left:309px;top:190.5px;width:38px;height:2.6px;background:#e4ee00;border-radius:2px"></div>
<div class="a" style="left:127px;top:188px;width:5px;height:1.2px;background:#f2f2d0;"></div>
<div class="a" style="left:250px;top:187.6px;width:30px;height:1.2px;background:#c8cc70;"></div>
<div class="a" style="left:125px;top:174px;width:224px;height:17px;background:transparent;box-sizing:border-box;border:1.7px solid #2c7a2c"></div>
<div class="a" style="left:346.8px;top:188.8px;width:3.6px;height:3.6px;background:#217346;box-shadow:0 0 0 0.8px #fff"></div>
<div class="a" style="left:413px;top:194px;width:226px;height:174px;background:#f0f0f0;box-sizing:border-box;border:1px solid #4a98e4"></div>
<div class="a" style="left:414px;top:195px;width:224px;height:21.5px;background:#ffffff;"></div>
<span class="t" style="left:420.4px;top:201.68px;font-size:9.4px;color:#1a1a1a;font-weight:normal;letter-spacing:-0.347px;">New Name</span>
<span class="t" style="left:585px;top:201.38px;font-size:9.6px;color:#3a3a3a;font-weight:bold;letter-spacing:0.000px;">?</span>
<svg class="a" style="left:617px;top:202px;" width="8" height="8" viewBox="0 0 8 8"><path d="M0.500 0.500l7 7M7.500 0.500l-7 7" stroke="#222" stroke-width="1.250"/></svg>
<span class="t" style="left:418.5px;top:223.95px;font-size:8.8px;color:#1a1a1a;font-weight:normal;letter-spacing:-0.384px;">Name:</span>
<div class="a" style="left:418.5px;top:231.8px;width:5.6px;height:0.8px;background:#555;"></div>
<span class="t" style="left:418.5px;top:241.25px;font-size:8.8px;color:#1a1a1a;font-weight:normal;letter-spacing:-0.315px;">Scope:</span>
<div class="a" style="left:418.5px;top:249.1px;width:4.8px;height:0.8px;background:#555;"></div>
<span class="t" style="left:418.5px;top:259.95px;font-size:8.8px;color:#1a1a1a;font-weight:normal;letter-spacing:-0.260px;">Comment:</span>
<div class="a" style="left:424.5px;top:267.8px;width:5.2px;height:0.8px;background:#555;"></div>
<span class="t" style="left:418.5px;top:328.95px;font-size:8.8px;color:#1a1a1a;font-weight:normal;letter-spacing:-0.164px;">Refers to:</span>
<div class="a" style="left:418.5px;top:336.8px;width:5.2px;height:0.8px;background:#555;"></div>
<div class="a" style="left:463.8px;top:223px;width:170px;height:14.6px;background:#fff;box-sizing:border-box;border:1px solid #b7babe"></div>
<span class="t" style="left:467px;top:226.17px;font-size:9.2px;color:#1a1a1a;font-weight:normal;letter-spacing:-0.646px;">Rows</span>
<div class="a" style="left:487.8px;top:226px;width:0.9px;height:9px;background:#222;"></div>
<svg class="a" style="left:0;top:0;mix-blend-mode:multiply;opacity:1" width="747" height="408" viewBox="0 0 747 408"><path d="M459.8 224.6 Q459.8 223.6 462 223.7 L480 223.9 L499 224.6 Q500.3 224.7 500.3 226 L500 234.6 Q500 235.6 498 235.7 L480 236 L461.500 236.2 Q459.8 236.2 459.8 235 Z" fill="#ffff00"/></svg>
<div class="a" style="left:463.8px;top:240.3px;width:113.3px;height:15.4px;background:#fff;box-sizing:border-box;border:1px solid #b7babe"></div>
<div class="a" style="left:564.7px;top:240.3px;width:12.4px;height:15.4px;background:#e4e4e4;box-sizing:border-box;border:1px solid #a9a9a9"></div>
<svg class="a" style="left:567.6px;top:246.3px;" width="6.6" height="4" viewBox="0 0 6.6 4"><path d="M0.4 0.4l2.9 2.9 2.9-2.9" stroke="#444" stroke-width="1.25" fill="none"/></svg>
<span class="t" style="left:467px;top:244.15px;font-size:8.8px;color:#1a1a1a;font-weight:normal;letter-spacing:0.318px;">Workbook</span>
<div class="a" style="left:463.8px;top:259px;width:170px;height:65px;background:#fff;box-sizing:border-box;border:1px solid #b7babe"></div>
<div class="a" style="left:619.5px;top:260px;width:13.3px;height:63px;background:#f1f1f1;"></div>
<svg class="a" style="left:622px;top:265.8px;" width="6.6" height="4" viewBox="0 0 6.6 4"><path d="M0.4 3.4l2.9-2.9 2.9 2.9" stroke="#a6a6a6" stroke-width="1.3" fill="none"/></svg>
<svg class="a" style="left:622px;top:314px;" width="6.6" height="4" viewBox="0 0 6.6 4"><path d="M0.4 0.4l2.9 2.9 2.9-2.9" stroke="#a6a6a6" stroke-width="1.3" fill="none"/></svg>
<div class="a" style="left:463.8px;top:327.8px;width:153.2px;height:14.2px;background:#fff;box-sizing:border-box;border:1px solid #b7babe"></div>
<span class="t" style="left:467px;top:330.95px;font-size:8.8px;color:#1a1a1a;font-weight:normal;letter-spacing:-0.223px;">=Table1</span>
<div class="a" style="left:617px;top:327.8px;width:16px;height:14.2px;background:#e9e9e9;box-sizing:border-box;border:1px solid #a9a9a9"></div>
<svg class="a" style="left:619px;top:330px;" width="12" height="9.5" viewBox="0 0 12 9.5"><rect x="0" y="0" width="12" height="9.5" fill="#fdfdfd"/><rect x="0" y="0" width="12" height="1.8" fill="#5b9ee0"/><path d="M0.5 4h11M0.5 6.4h11M0.5 8.800h11" stroke="#a9c8ea" stroke-width="0.8"/><path d="M0.600 1.800v7.7M11.4 1.800v7.700" stroke="#79aee2" stroke-width="0.8"/><path d="M4.400 2.400L8.600 4.600L9.400 7.800L7.200 7.200L6.200 8.200L4.600 5.400z" fill="#d2432a"/></svg>
<div class="a" style="left:515.2px;top:345px;width:54.6px;height:16px;background:#e1e1e1;box-sizing:border-box;border:1.6px solid #2f7fd6"></div>
<span class="t" style="left:536.5px;top:348.67px;font-size:9.2px;color:#1a1a1a;font-weight:normal;letter-spacing:-0.891px;">OK</span>
<svg class="a" style="left:0;top:0;mix-blend-mode:multiply;opacity:1" width="747" height="408" viewBox="0 0 747 408"><path d="M501 348.6 Q501 347.6 503 347.4 L506 346.2 L509 346.4 L510 347.2 L530 347 L554.8 347 L554.8 359.700 L530 359.8 L502 359.700 Q501 359.7 501 358.700 Z" fill="#ffff00"/></svg>
<div class="a" style="left:577px;top:345px;width:56px;height:16px;background:#e1e1e1;box-sizing:border-box;border:1px solid #b9b9b9"></div>
<span class="t" style="left:592.5px;top:348.85px;font-size:8.8px;color:#1a1a1a;font-weight:normal;letter-spacing:-0.315px;">Cancel</span>
<svg class="a" style="left:628px;top:357px;" width="10" height="10" viewBox="0 0 10 10"><path d="M9.500 1.500L1.500 9.500M9.500 5.500L5.500 9.500" stroke="#ababab" stroke-width="1.400"/></svg>
</body></html>
